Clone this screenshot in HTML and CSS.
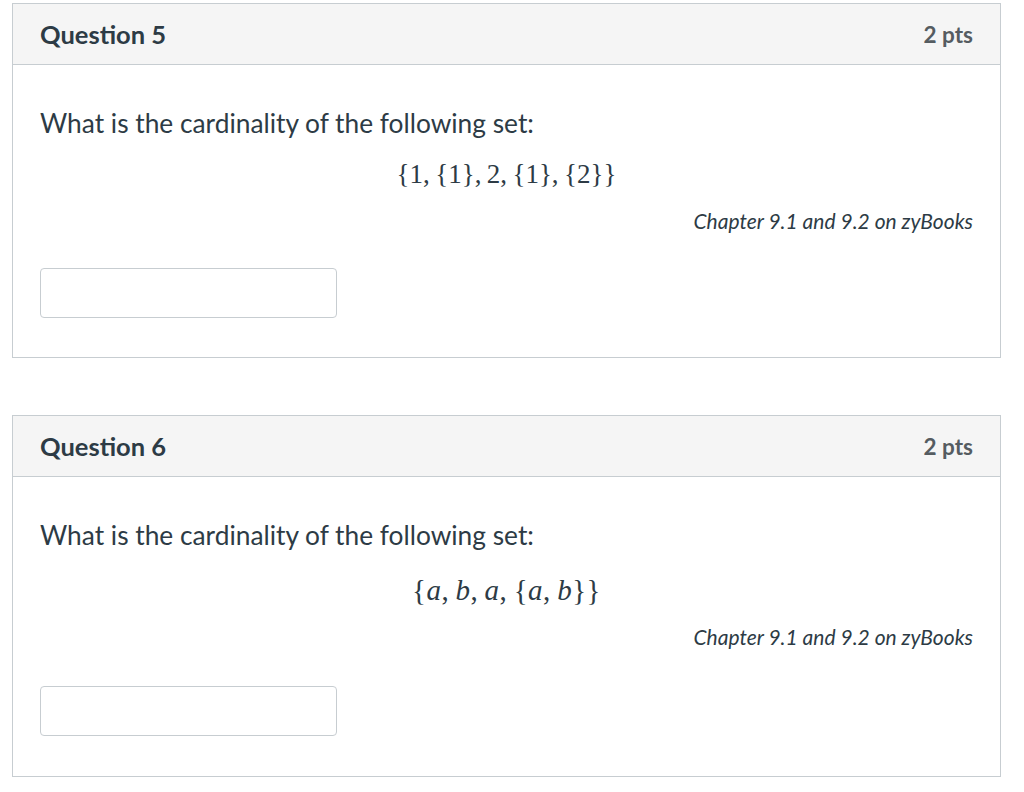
FILE: index.html
```html
<!DOCTYPE html>
<html>
<head>
<meta charset="utf-8">
<link rel="stylesheet" href="styles.css">
</head>
<body>
<div class="page">
  <div class="card">
    <div class="card-head">
      <span class="q-title">Question 5</span>
      <span class="q-pts">2 pts</span>
    </div>
    <div class="card-body">
      <p class="q-text">What is the cardinality of the following set:</p>
      <div class="math">{1,&thinsp;{1},&thinsp;2,&thinsp;{1},&thinsp;{2}}</div>
      <div class="hint">Chapter 9.1 and 9.2 on zyBooks</div>
      <input class="answer" type="text">
    </div>
  </div>
  <div class="card card-tall">
    <div class="card-head">
      <span class="q-title">Question 6</span>
      <span class="q-pts">2 pts</span>
    </div>
    <div class="card-body">
      <p class="q-text">What is the cardinality of the following set:</p>
      <div class="math">{<i>a</i>,&thinsp;<i>b</i>,&thinsp;<i>a</i>,&thinsp;{<i>a</i>,&thinsp;<i>b</i>}}</div>
      <div class="hint">Chapter 9.1 and 9.2 on zyBooks</div>
      <input class="answer" type="text">
    </div>
  </div>
</div>
</body>
</html>
```
FILE: styles.css
```css
html, body { margin: 0; padding: 0; background: #fff; }
body { font-family: Lato, "Open Sans", sans-serif; color: #2d3b45; }
.page { padding: 3px 0 0 12px; display: flex; flex-direction: column; gap: 57px; }
.card { width: 987px; border: 1px solid #c7cdd1; background: #fff; }
.card-head {
  height: 61px; box-sizing: border-box;
  background: #f5f5f5; border-bottom: 1px solid #c7cdd1;
  display: flex; justify-content: space-between; align-items: center;
  padding: 0 27px 0 27px;
}
.q-title { font-size: 25.5px; font-weight: 700; color: #2d3b45; }
.q-pts { font-size: 22.5px; font-weight: 700; color: #555c61; }
.card-body { padding: 44px 27px 39px 27px; display: flex; flex-direction: column; }
.q-text { margin: 0; font-size: 26.3px; line-height: 28px; }
.math {
  margin-top: 23px; text-align: center; font-family: "Liberation Serif", "DejaVu Serif", serif;
  font-size: 27px; line-height: 28px; color: #2d3b45;
}
.math i { font-style: italic; }
.hint { margin-top: 21px; text-align: right; font-style: italic; font-size: 21px; line-height: 24px; }
.answer {
  margin-top: 35px; width: 297px; height: 50px; box-sizing: border-box;
  border: 1px solid #c7cdd1; border-radius: 4px; background: #fff;
}
.card-tall .card-body { padding-bottom: 40px; }
.card-tall .math { margin-top: 27px; font-size: 29px; letter-spacing: 0.5px; }
.card-tall .answer { margin-top: 37px; }
```
